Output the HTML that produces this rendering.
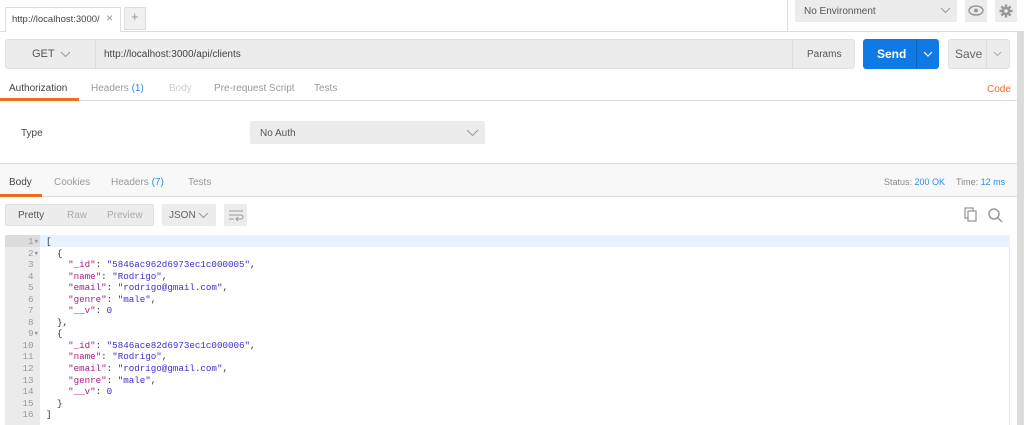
<!DOCTYPE html>
<html><head><style>
*{box-sizing:border-box;margin:0;padding:0}
body{width:1024px;height:425px;overflow:hidden;background:#fff;font-family:"Liberation Sans",sans-serif;font-size:10px;color:#505050;position:relative}
.a{position:absolute}
.g{background:#ececec}
.mono{font-family:"Liberation Mono",monospace;font-size:9.2px}
.k{color:#a11d83}.s{color:#3b2fd0}.n{color:#3b2fd0}
</style></head><body>
<div class="a" style="left:0;top:31px;width:1024px;height:1px;background:#ddd"></div>
<div class="a" style="left:5px;top:7px;width:116px;height:25px;background:#fff;border:1px solid #ddd;border-bottom:none"></div>
<div class="a" style="left:12px;top:14px;font-size:9.5px;color:#444">http://localhost:3000/</div>
<div class="a" style="left:106px;top:11px;font-size:12px;color:#999">×</div>
<div class="a" style="left:124px;top:7px;width:22px;height:23px;background:#f0f0f0;border:1px solid #ddd"></div>
<div class="a" style="left:131px;top:9px;font-size:13px;color:#999">+</div>
<div class="a" style="left:787px;top:0;width:1px;height:31px;background:#ddd"></div>
<div class="a g" style="left:795px;top:0;width:162px;height:22px"></div>
<div class="a" style="left:804px;top:6px;color:#555">No Environment</div>
<svg class="a" style="left:940px;top:7px" width="11" height="7"><polyline points="1,1 5.5,5.5 10,1" fill="none" stroke="#999" stroke-width="1"/></svg>
<div class="a g" style="left:965px;top:0;width:22px;height:22px"></div>
<svg class="a" style="left:968px;top:4px" width="16" height="13"><ellipse cx="8" cy="6.5" rx="7" ry="4.5" fill="none" stroke="#999" stroke-width="1.5"/><circle cx="8" cy="6.5" r="2" fill="#999"/></svg>
<div class="a g" style="left:995px;top:0;width:22px;height:22px"></div>
<svg class="a" style="left:999px;top:4px" width="14" height="14" viewBox="0 0 14 14"><g stroke="#999" stroke-width="2.4"><path d="M7 0.5V13.5M0.5 7H13.5M2.4 2.4L11.6 11.6M11.6 2.4L2.4 11.6"/></g><circle cx="7" cy="7" r="4.3" fill="#999"/><circle cx="7" cy="7" r="1.8" fill="#ececec"/></svg>
<div class="a" style="left:1017px;top:32px;width:7px;height:393px;background:#dcdcdc"></div>
<div class="a g" style="left:5px;top:39px;width:850px;height:30px;border-radius:3px;border:1px solid #e2e2e2"></div>
<div class="a" style="left:95px;top:39px;width:1px;height:30px;background:#ddd"></div>
<div class="a" style="left:32px;top:48px;font-size:11px;color:#555">GET</div>
<svg class="a" style="left:60px;top:51px" width="11" height="7"><polyline points="1,1 5.5,5.5 10,1" fill="none" stroke="#999" stroke-width="1"/></svg>
<div class="a" style="left:104px;top:49px;color:#444;font-size:10px">http://localhost:3000/api/clients</div>
<div class="a" style="left:792px;top:39px;width:1px;height:30px;background:#ddd"></div>
<div class="a" style="left:807px;top:49px;color:#555">Params</div>
<div class="a" style="left:863px;top:39px;width:76px;height:30px;background:#0f7ae5;border-radius:3px"></div>
<div class="a" style="left:916px;top:39px;width:1px;height:30px;background:#0b62b8"></div>
<div class="a" style="left:877px;top:47px;color:#fff;font-size:12px;font-weight:bold">Send</div>
<svg class="a" style="left:923px;top:51px" width="10" height="6"><polyline points="1,1 5,5 9,1" fill="none" stroke="#fff" stroke-width="1.2"/></svg>
<div class="a g" style="left:948px;top:39px;width:62px;height:30px;border-radius:3px;border:1px solid #e2e2e2"></div>
<div class="a" style="left:986px;top:39px;width:1px;height:30px;background:#ddd"></div>
<div class="a" style="left:955px;top:47px;color:#666;font-size:12px">Save</div>
<svg class="a" style="left:993px;top:51px" width="9" height="6"><polyline points="1,1 4.5,4.5 8,1" fill="none" stroke="#aaa" stroke-width="1"/></svg>
<div class="a" style="left:0;top:100px;width:1017px;height:1px;background:#ddd"></div>
<div class="a" style="left:0;top:98px;width:79px;height:3px;background:#f26b1d"></div>
<div class="a" style="left:9px;top:83px;color:#444">Authorization</div>
<div class="a" style="left:91px;top:83px;color:#999">Headers <span style="color:#2a8ee8">(1)</span></div>
<div class="a" style="left:169px;top:83px;color:#ccc">Body</div>
<div class="a" style="left:214px;top:83px;color:#999">Pre-request Script</div>
<div class="a" style="left:314px;top:83px;color:#999">Tests</div>
<div class="a" style="left:987px;top:84px;color:#f26b1d">Code</div>
<div class="a" style="left:21px;top:128px;color:#444">Type</div>
<div class="a g" style="left:250px;top:121px;width:235px;height:23px;border-radius:2px"></div>
<div class="a" style="left:260px;top:128px;color:#555">No Auth</div>
<svg class="a" style="left:466px;top:129px" width="13" height="8"><polyline points="1,1 6.5,6.5 12,1" fill="none" stroke="#999" stroke-width="1"/></svg>
<div class="a" style="left:0;top:163px;width:1017px;height:1px;background:#ddd"></div>
<div class="a" style="left:0;top:164px;width:1017px;height:33px;background:#f8f8f8"></div>
<div class="a" style="left:0;top:196px;width:1017px;height:1px;background:#ddd"></div>
<div class="a" style="left:0;top:194px;width:42px;height:3px;background:#f26b1d"></div>
<div class="a" style="left:9px;top:177px;color:#444">Body</div>
<div class="a" style="left:54px;top:177px;color:#999">Cookies</div>
<div class="a" style="left:111px;top:177px;color:#999">Headers <span style="color:#2a8ee8">(7)</span></div>
<div class="a" style="left:188px;top:177px;color:#999">Tests</div>
<div class="a" style="left:884px;top:177px;color:#888;font-size:9px">Status: <span style="color:#2a8ee8">200 OK</span></div>
<div class="a" style="left:956px;top:177px;color:#888;font-size:9px">Time: <span style="color:#2a8ee8">12 ms</span></div>
<div class="a g" style="left:5px;top:204px;width:149px;height:22px;border-radius:2px;border:1px solid #e0e0e0"></div>
<div class="a" style="left:18px;top:210px;color:#555">Pretty</div>
<div class="a" style="left:67px;top:210px;color:#aaa">Raw</div>
<div class="a" style="left:107px;top:210px;color:#aaa">Preview</div>
<div class="a g" style="left:162px;top:204px;width:54px;height:22px;border-radius:2px"></div>
<div class="a" style="left:169px;top:210px;color:#666">JSON</div>
<svg class="a" style="left:198px;top:212px" width="11" height="7"><polyline points="1,1 5.5,5.5 10,1" fill="none" stroke="#999" stroke-width="1"/></svg>
<div class="a g" style="left:224px;top:204px;width:23px;height:22px;border-radius:2px"></div>
<svg class="a" style="left:228px;top:209px" width="16" height="12"><path d="M1 2H15M1 6H13a2 2 0 0 1 0 4H9M1 10H6M10 8l-2 2 2 2" fill="none" stroke="#999" stroke-width="1"/></svg>
<svg class="a" style="left:964px;top:207px" width="14" height="15"><rect x="1" y="1" width="8" height="10" fill="none" stroke="#999" stroke-width="1.3"/><rect x="4" y="4" width="8" height="10" fill="#fff" stroke="#999" stroke-width="1.3"/></svg>
<svg class="a" style="left:987px;top:207px" width="16" height="16"><circle cx="7" cy="7" r="5" fill="none" stroke="#999" stroke-width="1.5"/><path d="M10.5 10.5L15 15" stroke="#999" stroke-width="1.5"/></svg>
<div class="a" style="left:5px;top:235px;width:1005px;height:190px;border:1px solid #e6e6e6;border-bottom:none"></div>
<div class="a" style="left:5px;top:235px;width:35px;height:190px;background:#ebebeb"></div>
<div class="a" style="left:40px;top:235px;width:970px;height:12px;background:#e8f2ff"></div>
<div class="a" style="left:5px;top:235px;width:35px;height:12px;background:#dcdcdc"></div>
<div class="a mono" style="left:5px;top:236px;width:36px;line-height:11.55px;text-align:right;color:#999;padding-right:2px;white-space:pre">1▾
2▾
3 
4 
5 
6 
7 
8 
9▾
10 
11 
12 
13 
14 
15 
16 </div>
<div class="a mono" style="left:46px;top:236px;line-height:11.55px;white-space:pre;color:#333">[
  {
    <span class="k">"_id"</span>: <span class="s">"5846ac962d6973ec1c000005"</span>,
    <span class="k">"name"</span>: <span class="s">"Rodrigo"</span>,
    <span class="k">"email"</span>: <span class="s">"rodrigo@gmail.com"</span>,
    <span class="k">"genre"</span>: <span class="s">"male"</span>,
    <span class="k">"__v"</span>: <span class="n">0</span>
  },
  {
    <span class="k">"_id"</span>: <span class="s">"5846ace82d6973ec1c000006"</span>,
    <span class="k">"name"</span>: <span class="s">"Rodrigo"</span>,
    <span class="k">"email"</span>: <span class="s">"rodrigo@gmail.com"</span>,
    <span class="k">"genre"</span>: <span class="s">"male"</span>,
    <span class="k">"__v"</span>: <span class="n">0</span>
  }
]</div>
</body></html>
